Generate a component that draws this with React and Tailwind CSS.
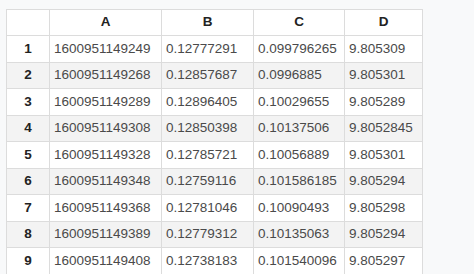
const columns = ['A', 'B', 'C', 'D'];

const rows = [
  ['1', '1600951149249', '0.12777291', '0.099796265', '9.805309'],
  ['2', '1600951149268', '0.12857687', '0.0996885', '9.805301'],
  ['3', '1600951149289', '0.12896405', '0.10029655', '9.805289'],
  ['4', '1600951149308', '0.12850398', '0.10137506', '9.8052845'],
  ['5', '1600951149328', '0.12785721', '0.10056889', '9.805301'],
  ['6', '1600951149348', '0.12759116', '0.101586185', '9.805294'],
  ['7', '1600951149368', '0.12781046', '0.10090493', '9.805298'],
  ['8', '1600951149389', '0.12779312', '0.10135063', '9.805294'],
  ['9', '1600951149408', '0.12738183', '0.101540096', '9.805297'],
];

const App = () => {
  return (
    <div
      className="w-[474px] h-[274px] overflow-hidden bg-[#f8f9fa] pl-[6px] pt-[9px] text-[13.5px] text-[#4a4a4a]"
      style={{ fontFamily: '"Liberation Sans", Arial, sans-serif' }}
    >
      <table className="border-collapse bg-white table-fixed w-[416px]">
        <colgroup>
          <col className="w-[43px]" />
          <col className="w-[112px]" />
          <col className="w-[92px]" />
          <col className="w-[91px]" />
          <col className="w-[78px]" />
        </colgroup>
        <thead>
          <tr className="h-[26px]">
            <th className="border border-[#dcdcdc]"></th>
            {columns.map((c) => (
              <th key={c} className="border border-[#dcdcdc] font-bold text-center text-[#222]">
                {c}
              </th>
            ))}
          </tr>
        </thead>
        <tbody>
          {rows.map((r, i) => (
            <tr key={r[0]} className={i % 2 === 1 ? 'h-[26.5px] bg-[#f3f3f3]' : 'h-[26.5px]'}>
              <td className="border border-[#dcdcdc] font-bold text-center text-[#222]">{r[0]}</td>
              {r.slice(1).map((v, j) => (
                <td key={j} className="border border-[#dcdcdc] px-[4px] whitespace-nowrap">
                  {v}
                </td>
              ))}
            </tr>
          ))}
        </tbody>
      </table>
    </div>
  );
};

export default App;
